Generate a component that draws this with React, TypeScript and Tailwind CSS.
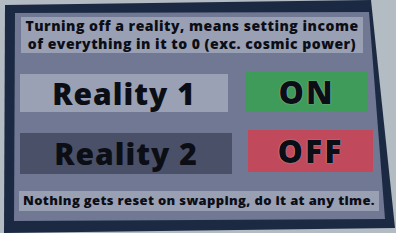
import React from "react";

export default function App() {
  const font = { fontFamily: "'Open Sans', 'Noto Sans', sans-serif" };
  return (
    <div className="w-[396px] h-[233px] bg-[#b3bbc3] overflow-hidden" style={font}>
      <div className="w-[396px] h-[233px] bg-[#1b2a42] [clip-path:polygon(5px_5px,371px_0px,395px_228px,4px_233px)] pl-[14px] pt-[12px]">
        <div className="w-[374px] h-[209px] bg-[#707894] [clip-path:polygon(1px_1px,355px_0px,371px_207px,0px_209px)] flex flex-col pt-[5px]">
          <div className="ml-[7px] w-[342px] h-[36px] bg-[#9aa0b4] flex flex-col items-center justify-center text-[14px] leading-[18px] font-extrabold tracking-[0.5px] text-[#0c0e16] whitespace-nowrap">
            <span>Turning off a reality, means setting income</span>
            <span>of everything in it to 0 (exc. cosmic power)</span>
          </div>

          <div className="mt-[19px] flex h-[40px]">
            <div className="ml-[6px] mt-[2px] w-[208px] h-[38px] bg-[#9aa1b5] flex items-center justify-center text-[30px] font-extrabold tracking-[1px] text-[#0c0e16]">
              Reality 1
            </div>
            <div className="ml-[17px] w-[123px] h-[39px] bg-[#3f9b5a] flex items-center justify-center text-[32px] font-extrabold tracking-[2px] text-[#0c0e16] [text-shadow:0_0_1px_#e8e8e8]">
              ON
            </div>
          </div>

          <div className="mt-[18px] flex h-[44px]">
            <div className="ml-[6px] mt-[3px] w-[212px] h-[41px] bg-[#4a5068] flex items-center justify-center text-[30px] font-extrabold tracking-[1px] text-[#0c0e16]">
              Reality 2
            </div>
            <div className="ml-[16px] w-[125px] h-[42px] bg-[#c04a5c] flex items-center justify-center text-[32px] font-extrabold tracking-[2px] text-[#0c0e16] [text-shadow:0_0_1px_#e8e8e8]">
              OFF
            </div>
          </div>

          <div className="mt-[17px] ml-[5px] w-[360px] h-[20px] bg-[#9aa0b4] flex items-center justify-center text-[13px] font-extrabold tracking-[0.35px] text-[#0c0e16] whitespace-nowrap">
            Nothing gets reset on swapping, do it at any time.
          </div>
        </div>
      </div>
    </div>
  );
}
